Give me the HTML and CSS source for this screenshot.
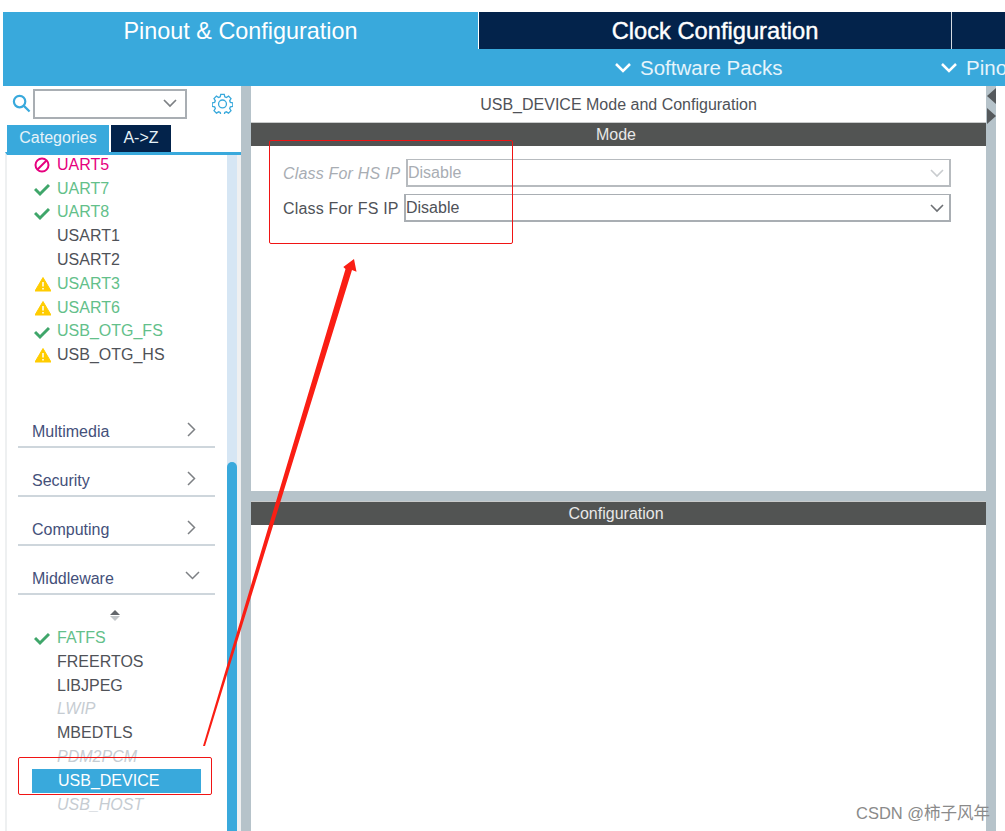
FILE: index.html
```html
<!DOCTYPE html>
<html lang="en">
<head>
<meta charset="utf-8">
<title>USB_DEVICE Mode and Configuration</title>
<link rel="stylesheet" href="styles.css">
</head>
<body>
<div class="app">
  <header class="tabs">
    <div class="tab tab-active">Pinout &amp; Configuration</div>
    <div class="tab tab-clock">Clock Configuration</div>
    <div class="tab tab-rest"></div>
  </header>
  <nav class="subbar">
    <div class="sub sub-packs"><svg class="sub-chev" viewBox="0 0 18 12"><path d="M2 2l7 7 7-7"/></svg>Software Packs</div>
    <div class="sub sub-pinout"><svg class="sub-chev" viewBox="0 0 18 12"><path d="M2 2l7 7 7-7"/></svg>Pinout</div>
  </nav>
  <div class="workspace">
    <aside class="sidebar">
      <div class="search">
        <svg class="search-icon" viewBox="0 0 20 20"><circle cx="8" cy="8" r="6"/><path d="M12.5 12.5l6 6"/></svg>
        <div class="combo"><svg class="chev" viewBox="0 0 14 9"><path d="M1 1l6 6 6-6"/></svg></div>
        <svg class="gear" viewBox="0 0 24 24"><path d="M10 1.500h4l.6 2.800 1.800.8 2.500-1.500 2.800 2.800-1.500 2.500.8 1.800 2.800.6v4l-2.800.6-.8 1.800 1.500 2.500-2.800 2.800-2.500-1.500-1.800.8-.6 2.800h-4l-.6-2.800-1.800-.8-2.500 1.500-2.800-2.800 1.500-2.500-.8-1.800-2.800-.6v-4l2.800-.6.8-1.800-1.500-2.500 2.800-2.800 2.500 1.500 1.800-.8z"/><circle cx="12" cy="12.500" r="4.500"/></svg>
      </div>
      <div class="cat-tabs">
        <div class="cat-tab cat-on">Categories</div>
        <div class="cat-tab cat-off">A-&gt;Z</div>
      </div>
      <div class="panel">
        <div class="tree">
          <ul class="items">
            <li class="item pink"><svg class="ico" viewBox="0 0 16 16"><circle cx="8" cy="8" r="6.500"/><path d="M3.500 12.500l9-9"/></svg>UART5</li>
            <li class="item green"><svg class="ico" viewBox="0 0 16 16"><path class="tick" d="M1 8l5 5 9-9"/></svg>UART7</li>
            <li class="item green"><svg class="ico" viewBox="0 0 16 16"><path class="tick" d="M1 8l5 5 9-9"/></svg>UART8</li>
            <li class="item">USART1</li>
            <li class="item">USART2</li>
            <li class="item green"><svg class="ico ico-warn" viewBox="0 0 16 16"><path class="warn" d="M8 1.500l8 13.500H0z"/><path class="bang" d="M8 6v4.500M8 12v1.500"/></svg>USART3</li>
            <li class="item green"><svg class="ico ico-warn" viewBox="0 0 16 16"><path class="warn" d="M8 1.500l8 13.500H0z"/><path class="bang" d="M8 6v4.500M8 12v1.500"/></svg>USART6</li>
            <li class="item green"><svg class="ico" viewBox="0 0 16 16"><path class="tick" d="M1 8l5 5 9-9"/></svg>USB_OTG_FS</li>
            <li class="item"><svg class="ico ico-warn" viewBox="0 0 16 16"><path class="warn" d="M8 1.500l8 13.500H0z"/><path class="bang" d="M8 6v4.500M8 12v1.500"/></svg>USB_OTG_HS</li>
          </ul>
          <div class="group group-first"><span>Multimedia</span><svg class="arrow" viewBox="0 0 9 15"><path d="M1 1l6.500 6.500L1 14"/></svg></div>
          <div class="group"><span>Security</span><svg class="arrow" viewBox="0 0 9 15"><path d="M1 1l6.500 6.500L1 14"/></svg></div>
          <div class="group"><span>Computing</span><svg class="arrow" viewBox="0 0 9 15"><path d="M1 1l6.500 6.500L1 14"/></svg></div>
          <div class="group"><span>Middleware</span><svg class="arrow-down" viewBox="0 0 15 9"><path d="M1 1l6.500 6.500L14 1"/></svg></div>
          <div class="sorter"><i class="up"></i><i class="down"></i></div>
          <ul class="items">
            <li class="item green"><svg class="ico" viewBox="0 0 16 16"><path class="tick" d="M1 8l5 5 9-9"/></svg>FATFS</li>
            <li class="item">FREERTOS</li>
            <li class="item">LIBJPEG</li>
            <li class="item off">LWIP</li>
            <li class="item">MBEDTLS</li>
            <li class="item off">PDM2PCM</li>
            <li class="item selected">USB_DEVICE</li>
            <li class="item off">USB_HOST</li>
          </ul>
        </div>
        <div class="scroll"><div class="thumb"></div></div>
      </div>
    </aside>
    <div class="splitter"></div>
    <main class="main">
      <h1 class="title">USB_DEVICE Mode and Configuration</h1>
      <div class="bar">Mode</div>
      <section class="mode">
        <div class="row row-hs">
          <label class="lab">Class For HS IP</label>
          <div class="select">Disable<svg class="chev" viewBox="0 0 14 9"><path d="M1 1l6 6 6-6"/></svg></div>
        </div>
        <div class="row row-fs">
          <label class="lab">Class For FS IP</label>
          <div class="select">Disable<svg class="chev" viewBox="0 0 14 9"><path d="M1 1l6 6 6-6"/></svg></div>
        </div>
      </section>
      <div class="divider"></div>
      <div class="bar">Configuration</div>
    </main>
    <div class="side-bar">
      <i class="tri-left"></i>
      <i class="tri-right"></i>
    </div>
  </div>
</div>
<div class="note note-mode"></div>
<div class="note note-usb"></div>
<svg class="callout" viewBox="0 0 1005 831"><path d="M203 746L345.500 269L343.300 267L354 259L356.500 271.700L352 270L205 746Z"/></svg>
<div class="watermark">CSDN @柿子风年</div>
</body>
</html>
```
FILE: styles.css
```css
* { box-sizing: border-box; }
html, body { margin: 0; height: 831px; overflow: hidden; background: #fff; }
body { font-family: "Liberation Sans", Arial, sans-serif; color: #4f5258; position: relative; }
ul { list-style: none; margin: 0; padding: 0; }
svg { display: block; fill: none; }

.app { padding: 12px 0 0 3px; width: 1005px; height: 831px; display: flex; flex-direction: column; }

.tabs { display: flex; height: 37px; background: #39a9dc; }
.tab { display: flex; align-items: center; justify-content: center; font-size: 23.400px; color: #fff; padding-top: 1px; }
.tab-active { width: 475px; background: #39a9dc; }
.tab-clock { width: 474px; background: #03234b; border-left: 1px solid #fff; border-right: 1px solid #d5dbe2; font-size: 23.700px; -webkit-text-stroke: 0.4px #fff; }
.tab-rest { flex: 1; background: #03234b; }

.subbar { height: 37px; background: #39a9dc; display: flex; }
.sub { display: flex; align-items: center; gap: 8px; font-size: 20.500px; color: #e6f4fb; white-space: nowrap; }
.sub-packs { margin-left: 611px; width: 326px; }
.sub-pinout { overflow: hidden; flex: 1; }
.sub-chev { width: 18px; height: 12px; stroke: #fff; stroke-width: 2.500; flex: none; }

.workspace { display: flex; flex: 1; min-height: 0; }

.sidebar { width: 238px; display: flex; flex-direction: column; }
.search { height: 39px; display: flex; align-items: center; padding: 0 0 4px 9px; }
.search-icon { width: 19px; height: 19px; stroke: #39a9dc; stroke-width: 2.300; }
.combo { width: 154px; height: 30px; border: 2px solid #a9aeb3; margin-left: 2px; display: flex; align-items: center; justify-content: flex-end; padding-right: 8px; }
.combo .chev { width: 14px; height: 9px; stroke: #7d8084; stroke-width: 1.700; }
.gear { width: 21px; height: 21px; stroke: #39a9dc; stroke-width: 1.500; margin-left: 25px; }

.cat-tabs { display: flex; height: 27px; padding-left: 4px; }
.cat-tab { display: flex; align-items: center; justify-content: center; font-size: 16px; color: #e6f2f8; padding-bottom: 1px; }
.cat-on { width: 102px; background: #39a9dc; }
.cat-off { width: 60px; margin-left: 2px; background: #03234b; }

.panel { flex: 1; min-height: 0; display: flex; border-top: 3px solid #39a9dc; margin-left: 2px; border-left: 2px solid #eef0f1; overflow: hidden; background: #eff0f1; }
.tree { width: 220px; background: #fff; }
.tree > .items:first-child { margin-top: -2px; }
.scroll { width: 10px; background: #d6e6f4; }
.thumb { margin-top: 307px; height: 500px; background: #39a9dc; border-radius: 5px 5px 0 0; }

.item { height: 23.800px; display: flex; align-items: center; padding-left: 50px; position: relative; font-size: 16px; color: #4f5258; white-space: nowrap; }
.green { color: #63c08a; }
.pink { color: #e6007e; }
.off { color: #c6ccd2; font-style: italic; }
.selected { margin-left: 25px; width: 169px; padding-left: 26px; color: #fff; background: #39a9dc; }
.ico { position: absolute; left: 27px; top: 4px; width: 16px; height: 16px; }
.ico-warn { left: 28px; }
.ico circle, .ico path { stroke: #e6007e; stroke-width: 2; }
.ico .tick { stroke: #3fa66a; stroke-width: 3; }
.ico .warn { fill: #ffcc00; stroke: #ffcc00; stroke-width: 1; stroke-linejoin: round; }
.ico .bang { stroke: #fff; stroke-width: 1.500; }

.group { height: 49px; margin-left: 11px; width: 197px; padding: 0 19px 5px 14px; display: flex; align-items: flex-end; justify-content: space-between; border-bottom: 2px solid #ced6dc; font-size: 16px; color: #44507a; }
.group-first { margin-top: 31px; height: 50px; }
.arrow { width: 9px; height: 15px; stroke: #7d8084; stroke-width: 1.500; margin-bottom: 4px; }
.arrow-down { width: 15px; height: 9px; stroke: #7d8084; stroke-width: 1.500; margin-bottom: 8px; margin-right: -4px; }

.sorter { height: 31px; margin-left: 103px; padding-top: 15px; }
.sorter i { display: block; width: 0; height: 0; border-left: 5px solid transparent; border-right: 5px solid transparent; }
.up { border-bottom: 5px solid #62666b; margin-bottom: 1px; }
.down { border-top: 5px solid #c2c6c9; }

.splitter { width: 10px; background: #b6c3ca; }

.main { width: 735px; display: flex; flex-direction: column; }
.title { margin: 0; height: 36px; padding-top: 1px; display: flex; align-items: center; justify-content: center; font-size: 16px; font-weight: 400; color: #4f5258; }
.bar { height: 24px; background: #525453; color: #e8e8e8; font-size: 16px; display: flex; align-items: center; justify-content: center; padding-right: 5px; border-top: 1px solid #c9cbcb; flex: none; }
.mode { height: 345px; padding: 13px 35px 0 32px; }
.row { display: flex; align-items: center; font-size: 16px; height: 28px; }
.lab { letter-spacing: 0.180px; padding-top: 1px; }
.row-hs { color: #a8adb3; margin-bottom: 7px; }
.row-hs .lab { font-style: italic; width: 123px; }
.row-fs .lab { width: 121px; }
.select { flex: 1; height: 28px; border: 2px solid #a9aeb3; border-top-width: 1px; padding-top: 1px; display: flex; align-items: center; justify-content: space-between; padding-right: 5px; }
.row-hs .select { border-color: #b7bbbf; }
.select .chev { width: 14px; height: 9px; stroke: #6d7074; stroke-width: 1.600; }
.row-hs .chev { stroke: #c9cccf; }
.divider { height: 10px; background: #b6c3ca; flex: none; }

.side-bar { width: 10px; background: #b6c3ca; position: relative; }
.tri-left, .tri-right { display: block; width: 0; height: 0; border-top: 8px solid transparent; border-bottom: 8px solid transparent; position: absolute; left: 1px; }
.tri-left { border-right: 9px solid #55595c; top: 2px; }
.tri-right { border-left: 9px solid #55595c; top: 22px; }

.note { position: absolute; border: 1px solid #f01414; border-radius: 2px; }
.note-mode { left: 269px; top: 140px; width: 244px; height: 104px; }
.note-usb { left: 18px; top: 757px; width: 194px; height: 38px; }
.callout { position: absolute; left: 0; top: 0; width: 1005px; height: 831px; pointer-events: none; }
.callout path { fill: #fa1e14; }
.watermark { position: absolute; left: 856px; top: 803px; font-family: "Liberation Sans", "Noto Sans CJK SC", sans-serif; font-size: 16.500px; line-height: 20px; color: #8a8a8a; white-space: nowrap; }
```
